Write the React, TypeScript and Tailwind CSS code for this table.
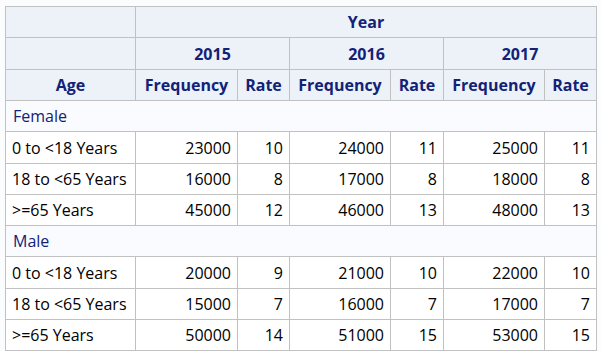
const head = "flex items-center justify-center bg-[#edf2f9] font-bold text-[#112277]";
const num = "flex items-center justify-end bg-white pr-[6px] text-black";

type Row = { age: string; vals: [number, number, number, number, number, number] };

const groups: { name: string; rows: Row[] }[] = [
  {
    name: "Female",
    rows: [
      { age: "0 to <18 Years", vals: [23000, 10, 24000, 11, 25000, 11] },
      { age: "18 to <65 Years", vals: [16000, 8, 17000, 8, 18000, 8] },
      { age: ">=65 Years", vals: [45000, 12, 46000, 13, 48000, 13] },
    ],
  },
  {
    name: "Male",
    rows: [
      { age: "0 to <18 Years", vals: [20000, 9, 21000, 10, 22000, 10] },
      { age: "18 to <65 Years", vals: [15000, 7, 16000, 7, 17000, 7] },
      { age: ">=65 Years", vals: [50000, 14, 51000, 15, 53000, 15] },
    ],
  },
];

export default function App() {
  return (
    <div className="min-h-[351px] w-[601px] bg-[#fbfcfe] pl-[5px] pt-[6px] font-['Open_Sans',sans-serif] text-[16px]">
      <div className="grid w-[592px] grid-cols-[129px_101px_51px_100px_52px_100px_51px] grid-rows-[30px_31px_30px_30px_31px_30px_30px_30px_31px_30px_30px] gap-px bg-[#c1c1c1] p-px">
        <div className={head}></div>
        <div className={`${head} col-span-6`}>Year</div>

        <div className={head}></div>
        <div className={`${head} col-span-2`}>2015</div>
        <div className={`${head} col-span-2`}>2016</div>
        <div className={`${head} col-span-2`}>2017</div>

        <div className={head}>Age</div>
        {["Frequency", "Rate", "Frequency", "Rate", "Frequency", "Rate"].map((h, i) => (
          <div key={i} className={head}>
            {h}
          </div>
        ))}

        {groups.map((g) => (
          <div key={g.name} className="contents">
            <div className="col-span-7 flex items-center bg-[#fafbfe] pl-[7px] text-[#112277]">
              {g.name}
            </div>
            {g.rows.map((r) => (
              <div key={r.age} className="contents">
                <div className="flex items-center bg-white pl-[6px] text-black">{r.age}</div>
                {r.vals.map((v, i) => (
                  <div key={i} className={num}>
                    {v}
                  </div>
                ))}
              </div>
            ))}
          </div>
        ))}
      </div>
    </div>
  );
}
